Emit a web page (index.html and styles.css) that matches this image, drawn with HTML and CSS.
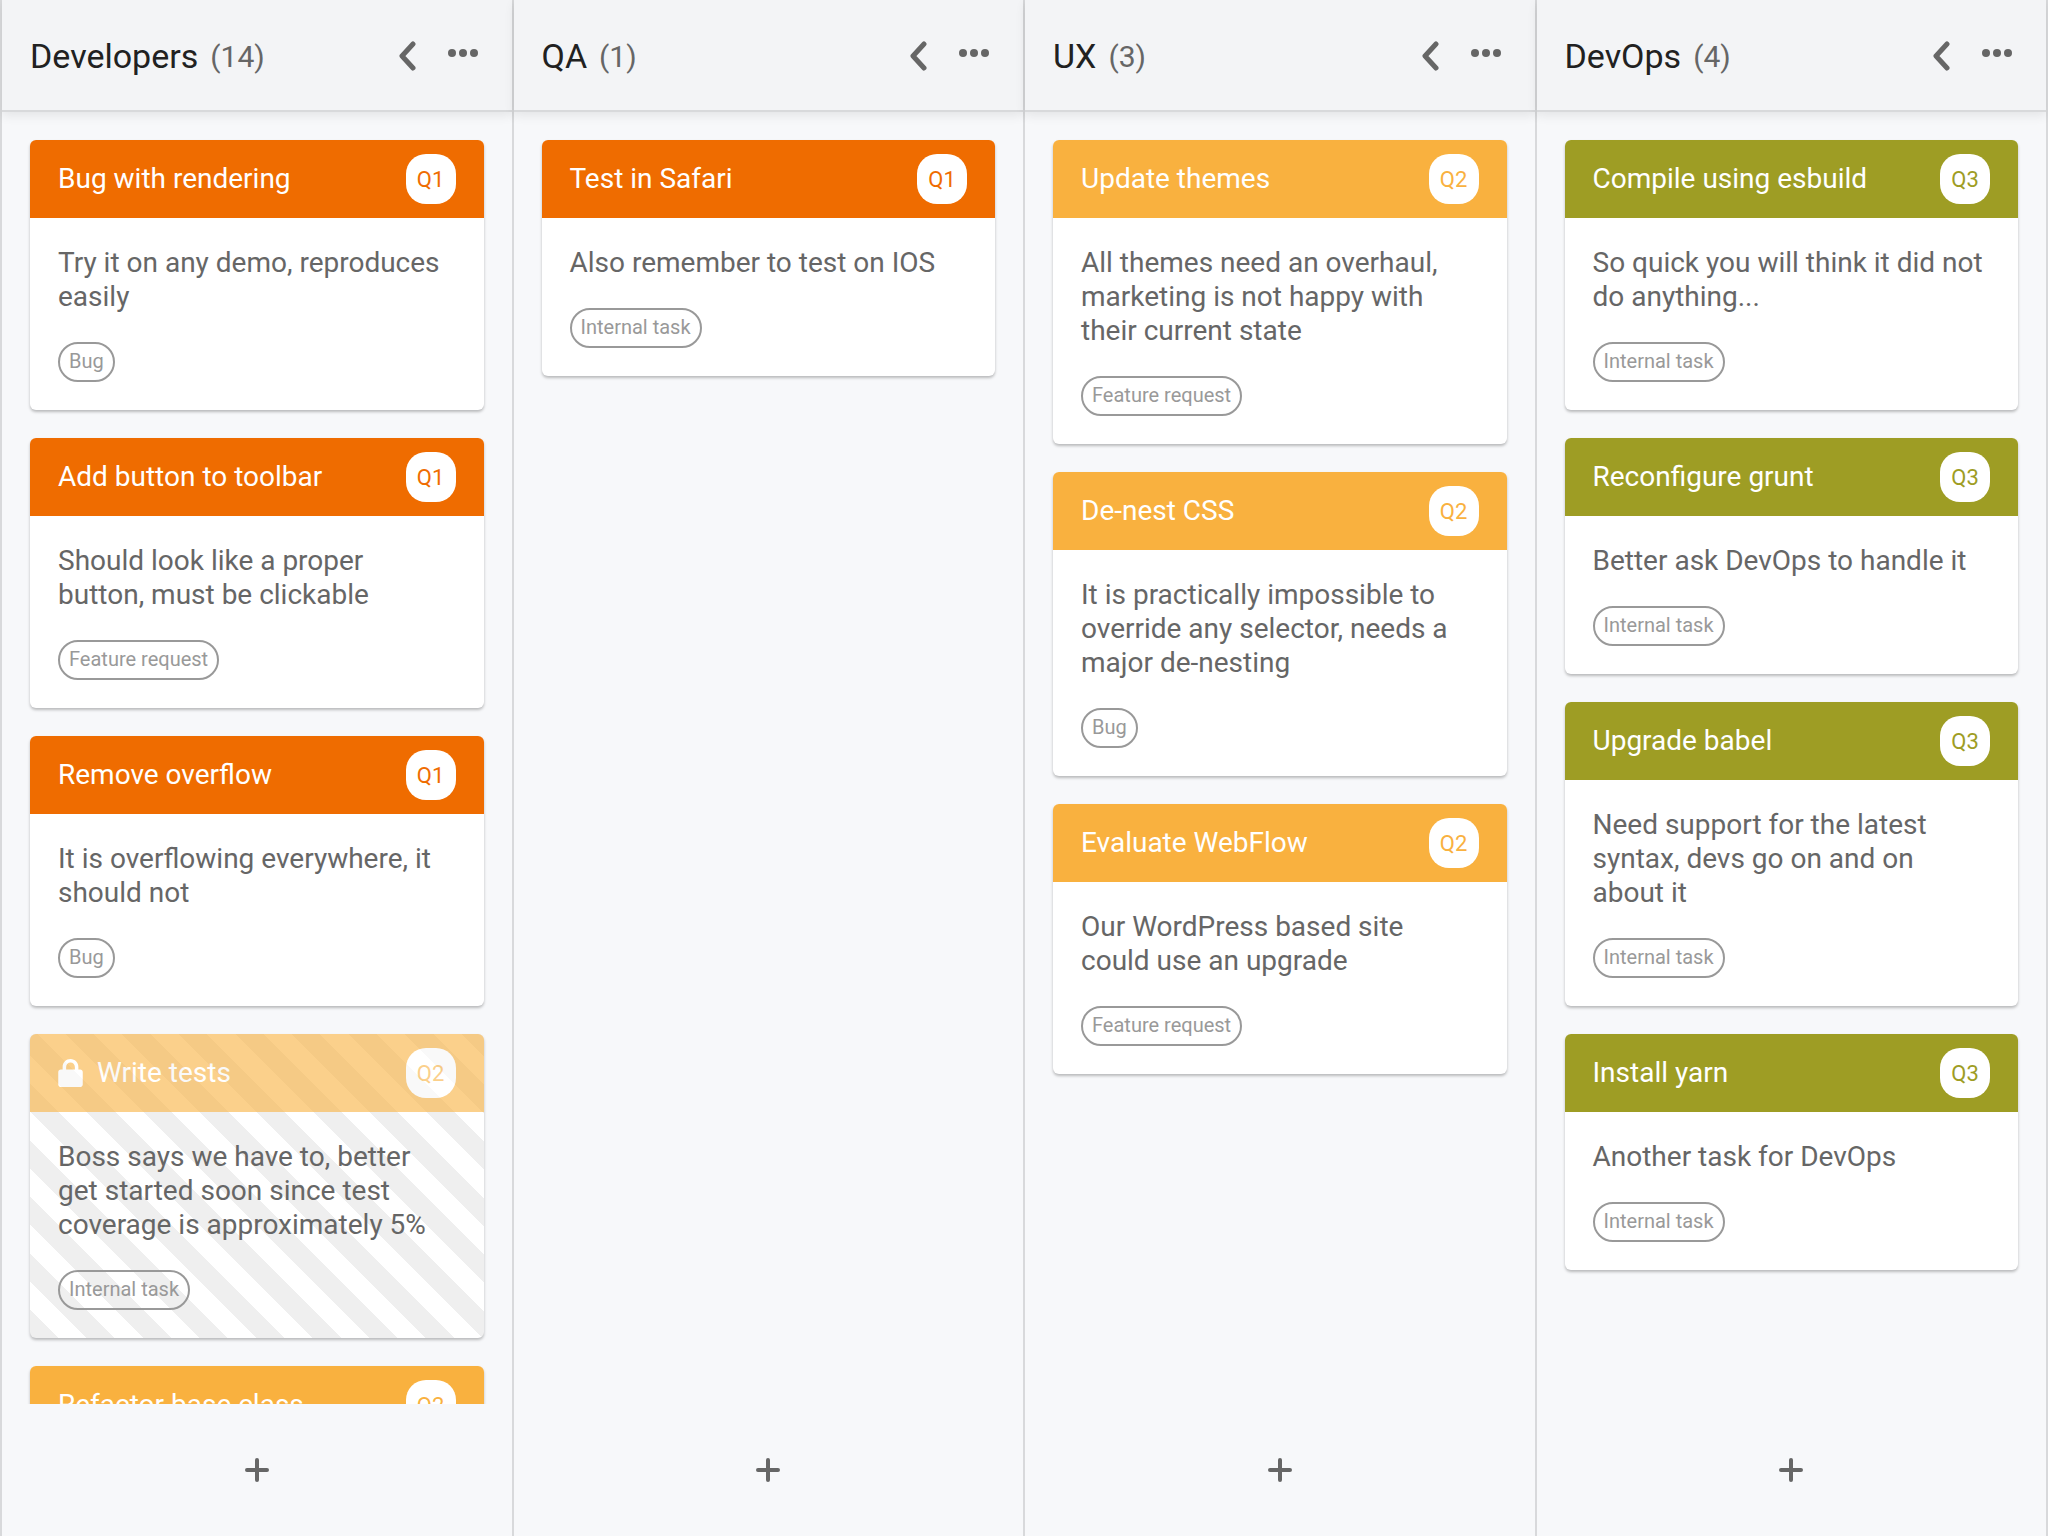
FILE: index.html
```html
<!DOCTYPE html>
<html lang="en">

<head>
    <meta charset="UTF-8">
    <meta name="viewport" content="width=device-width, initial-scale=1.0">
    <link rel="stylesheet" href="styles.css">
    <title>Task board</title>
</head>

<body>
    <svg class="sprite" aria-hidden="true">
        <symbol id="icon-collapse" viewBox="0 0 20 30">
            <path d="M15 3 L4 15 L15 27" fill="none" stroke="currentColor" stroke-width="5" stroke-linecap="round" stroke-linejoin="round" />
        </symbol>
        <symbol id="icon-more" viewBox="0 0 30 8">
            <circle cx="4" cy="4" r="4" />
            <circle cx="15" cy="4" r="4" />
            <circle cx="26" cy="4" r="4" />
        </symbol>
        <symbol id="icon-add" viewBox="0 0 24 24">
            <path d="M12 2 V22 M2 12 H22" fill="none" stroke="currentColor" stroke-width="4" stroke-linecap="round" />
        </symbol>
        <symbol id="icon-lock" viewBox="0 0 448 512">
            <path d="M400 192h-32v-46.600C368 65.800 304 .2 224.400 0 144.800-.2 80 64.500 80 144v48H48c-26.500 0-48 21.500-48 48v224c0 26.500 21.500 48 48 48h352c26.500 0 48-21.500 48-48V240c0-26.500-21.500-48-48-48zm-96 0H144v-46.100c0-44.100 35.300-80.800 79.400-81.200 44.400-.4 80.600 35.600 80.600 79.900z" />
        </symbol>
    </svg>

    <main class="board">
        <section class="column">
            <header class="column-header">
                <h2 class="column-title">Developers</h2>
                <span class="column-count">(14)</span>
                <button class="icon-button collapse" type="button" aria-label="Collapse Developers"><svg><use href="#icon-collapse" /></svg></button>
                <button class="icon-button more" type="button" aria-label="Developers menu"><svg><use href="#icon-more" /></svg></button>
            </header>
            <div class="card-list">
                <article class="card orange">
                    <header class="card-header">
                        <h3 class="card-title">Bug with rendering</h3>
                        <span class="badge">Q1</span>
                    </header>
                    <div class="card-body">
                        <p>Try it on any demo, reproduces easily</p>
                        <span class="tag">Bug</span>
                    </div>
                </article>
                <article class="card orange">
                    <header class="card-header">
                        <h3 class="card-title">Add button to toolbar</h3>
                        <span class="badge">Q1</span>
                    </header>
                    <div class="card-body">
                        <p>Should look like a proper button, must be clickable</p>
                        <span class="tag">Feature request</span>
                    </div>
                </article>
                <article class="card orange">
                    <header class="card-header">
                        <h3 class="card-title">Remove overflow</h3>
                        <span class="badge">Q1</span>
                    </header>
                    <div class="card-body">
                        <p>It is overflowing everywhere, it should not</p>
                        <span class="tag">Bug</span>
                    </div>
                </article>
                <article class="card yellow locked">
                    <header class="card-header">
                        <svg class="lock"><use href="#icon-lock" /></svg>
                        <h3 class="card-title">Write tests</h3>
                        <span class="badge">Q2</span>
                    </header>
                    <div class="card-body">
                        <p>Boss says we have to, better get started soon since test coverage is approximately 5%</p>
                        <span class="tag">Internal task</span>
                    </div>
                </article>
                <article class="card yellow">
                    <header class="card-header">
                        <h3 class="card-title">Refactor base class</h3>
                        <span class="badge">Q2</span>
                    </header>
                </article>
            </div>
            <footer class="column-footer">
                <button class="icon-button add" type="button" aria-label="Add task to Developers"><svg><use href="#icon-add" /></svg></button>
            </footer>
        </section>

        <section class="column">
            <header class="column-header">
                <h2 class="column-title">QA</h2>
                <span class="column-count">(1)</span>
                <button class="icon-button collapse" type="button" aria-label="Collapse QA"><svg><use href="#icon-collapse" /></svg></button>
                <button class="icon-button more" type="button" aria-label="QA menu"><svg><use href="#icon-more" /></svg></button>
            </header>
            <div class="card-list">
                <article class="card orange">
                    <header class="card-header">
                        <h3 class="card-title">Test in Safari</h3>
                        <span class="badge">Q1</span>
                    </header>
                    <div class="card-body">
                        <p>Also remember to test on IOS</p>
                        <span class="tag">Internal task</span>
                    </div>
                </article>
            </div>
            <footer class="column-footer">
                <button class="icon-button add" type="button" aria-label="Add task to QA"><svg><use href="#icon-add" /></svg></button>
            </footer>
        </section>

        <section class="column">
            <header class="column-header">
                <h2 class="column-title">UX</h2>
                <span class="column-count">(3)</span>
                <button class="icon-button collapse" type="button" aria-label="Collapse UX"><svg><use href="#icon-collapse" /></svg></button>
                <button class="icon-button more" type="button" aria-label="UX menu"><svg><use href="#icon-more" /></svg></button>
            </header>
            <div class="card-list">
                <article class="card yellow">
                    <header class="card-header">
                        <h3 class="card-title">Update themes</h3>
                        <span class="badge">Q2</span>
                    </header>
                    <div class="card-body">
                        <p>All themes need an overhaul, marketing is not happy with their current state</p>
                        <span class="tag">Feature request</span>
                    </div>
                </article>
                <article class="card yellow">
                    <header class="card-header">
                        <h3 class="card-title">De-nest CSS</h3>
                        <span class="badge">Q2</span>
                    </header>
                    <div class="card-body">
                        <p>It is practically impossible to override any selector, needs a major de-nesting</p>
                        <span class="tag">Bug</span>
                    </div>
                </article>
                <article class="card yellow">
                    <header class="card-header">
                        <h3 class="card-title">Evaluate WebFlow</h3>
                        <span class="badge">Q2</span>
                    </header>
                    <div class="card-body">
                        <p>Our WordPress based site could use an upgrade</p>
                        <span class="tag">Feature request</span>
                    </div>
                </article>
            </div>
            <footer class="column-footer">
                <button class="icon-button add" type="button" aria-label="Add task to UX"><svg><use href="#icon-add" /></svg></button>
            </footer>
        </section>

        <section class="column">
            <header class="column-header">
                <h2 class="column-title">DevOps</h2>
                <span class="column-count">(4)</span>
                <button class="icon-button collapse" type="button" aria-label="Collapse DevOps"><svg><use href="#icon-collapse" /></svg></button>
                <button class="icon-button more" type="button" aria-label="DevOps menu"><svg><use href="#icon-more" /></svg></button>
            </header>
            <div class="card-list">
                <article class="card green">
                    <header class="card-header">
                        <h3 class="card-title">Compile using esbuild</h3>
                        <span class="badge">Q3</span>
                    </header>
                    <div class="card-body">
                        <p>So quick you will think it did not do anything...</p>
                        <span class="tag">Internal task</span>
                    </div>
                </article>
                <article class="card green">
                    <header class="card-header">
                        <h3 class="card-title">Reconfigure grunt</h3>
                        <span class="badge">Q3</span>
                    </header>
                    <div class="card-body">
                        <p>Better ask DevOps to handle it</p>
                        <span class="tag">Internal task</span>
                    </div>
                </article>
                <article class="card green">
                    <header class="card-header">
                        <h3 class="card-title">Upgrade babel</h3>
                        <span class="badge">Q3</span>
                    </header>
                    <div class="card-body">
                        <p>Need support for the latest syntax, devs go on and on about it</p>
                        <span class="tag">Internal task</span>
                    </div>
                </article>
                <article class="card green">
                    <header class="card-header">
                        <h3 class="card-title">Install yarn</h3>
                        <span class="badge">Q3</span>
                    </header>
                    <div class="card-body">
                        <p>Another task for DevOps</p>
                        <span class="tag">Internal task</span>
                    </div>
                </article>
            </div>
            <footer class="column-footer">
                <button class="icon-button add" type="button" aria-label="Add task to DevOps"><svg><use href="#icon-add" /></svg></button>
            </footer>
        </section>
    </main>
</body>

</html>
```
FILE: styles.css
```css
* {
    box-sizing: border-box;
}

body {
    margin: 0;
    font-family: Roboto, "Liberation Sans", sans-serif;
    font-size: 28px;
    color: #666;
    background-color: #f7f8fa;
}

h2,
h3,
p {
    margin: 0;
    font-size: inherit;
    font-weight: 400;
}

.sprite {
    display: none;
}

/* Board and columns */
.board {
    display: flex;
    height: 100vh;
    border-left: 2px solid #d8d9db;
}

.column {
    flex: 1 1 0;
    min-width: 0;
    display: flex;
    flex-direction: column;
    border-right: 2px solid #d8d9db;
}

.column-header {
    flex: none;
    position: relative;
    z-index: 1;
    display: flex;
    align-items: center;
    height: 112px;
    padding: 2px 26px 0 28px;
    background-color: #f3f4f6;
    border-bottom: 2px solid #d8d9db;
    box-shadow: 0 4px 10px rgba(0, 0, 0, 0.08);
}

.column-title {
    font-size: 34px;
    color: #212121;
}

.column-count {
    margin: 0 auto 0 12px;
    font-size: 30px;
}

.icon-button {
    display: flex;
    align-items: center;
    justify-content: center;
    padding: 0;
    border: none;
    background: none;
    color: #666;
    fill: currentColor;
    cursor: pointer;
}

.collapse {
    width: 64px;
    height: 56px;
}

.collapse svg {
    width: 20px;
    height: 30px;
}

.more {
    width: 46px;
    height: 56px;
    padding-bottom: 6px;
}

.more svg {
    width: 30px;
    height: 8px;
}

.card-list {
    flex: 1;
    min-height: 0;
    overflow: hidden;
    padding: 28px 28px 0;
}

.column-footer {
    flex: none;
    display: flex;
    align-items: center;
    justify-content: center;
    height: 132px;
}

.add {
    width: 56px;
    height: 56px;
}

.add svg {
    width: 24px;
    height: 24px;
}

/* Cards */
.card {
    margin-bottom: 28px;
    background-color: #fff;
    border-radius: 6px;
    overflow: hidden;
    box-shadow: 0 2px 3px rgba(0, 0, 0, 0.25);
}

.card-header {
    display: flex;
    align-items: center;
    height: 78px;
    padding: 0 28px;
    color: #fff;
}

.card-title {
    flex: 1;
    padding-bottom: 2px;
}

.badge {
    display: flex;
    align-items: center;
    justify-content: center;
    width: 50px;
    height: 50px;
    padding-top: 1px;
    border-radius: 20px;
    background-color: #fff;
    font-size: 22px;
}

.card-body {
    padding: 28px;
    line-height: 34px;
}

.card-body p {
    margin-bottom: 28px;
}

.tag {
    display: block;
    width: fit-content;
    height: 40px;
    padding: 0 9px;
    border: 2px solid #999;
    border-radius: 20px;
    color: #999;
    font-size: 20px;
}

.orange .card-header {
    background-color: #ef6c00;
}

.orange .badge {
    color: #ef6c00;
}

.yellow .card-header {
    background-color: #f9b13f;
}

.yellow .badge {
    color: #f9b13f;
}

.green .card-header {
    background-color: #9e9d24;
}

.green .badge {
    color: #9e9d24;
}

/* Locked card, the stripes show through the header */
.locked {
    background-image: repeating-linear-gradient(45deg, #efefef, #efefef 20px, #fff 20px, #fff 40px);
}

.locked .card-header {
    opacity: 0.6;
}

.lock {
    width: 25px;
    height: 28px;
    margin-right: 14px;
    fill: #fff;
}
```
